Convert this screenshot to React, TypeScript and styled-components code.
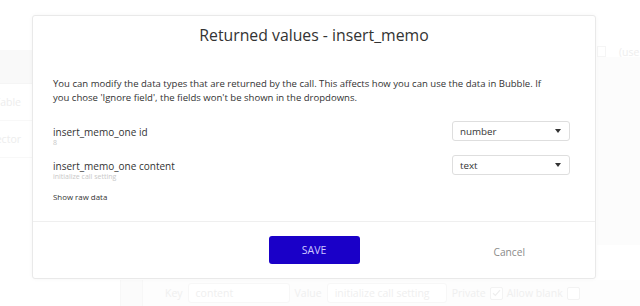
import React from "react";
import styled, { createGlobalStyle } from "styled-components";

const Global = createGlobalStyle`
  html, body {
    margin: 0;
    padding: 0;
    background: #ffffff;
    font-family: "Open Sans", "Liberation Sans", sans-serif;
  }
  body {
    width: 640px;
    height: 306px;
    overflow: hidden;
  }
`;

const Page = styled.div`
  position: relative;
  width: 640px;
  height: 306px;
  overflow: hidden;
  display: grid;
  grid-template-columns: 32px 1fr 43px;
  grid-template-rows: 1fr 26px;
`;

const Sidebar = styled.div`
  display: flex;
  flex-direction: column;
  padding-top: 50px;
`;

const SideBand = styled.div`
  height: 33px;
  background: #f9f9f9;
  border-bottom: 1px solid #f5f5f5;
`;

const SideItem = styled.div`
  height: 36px;
  display: flex;
  align-items: center;
  justify-content: flex-end;
  padding-right: 11px;
  white-space: nowrap;
  overflow: hidden;
  font-size: 10.5px;
  color: #ededed;
  border-bottom: 1px solid #f8f8f8;
`;

const Middle = styled.div``;

const RightCol = styled.div`
  display: flex;
  flex-direction: column;
  padding-top: 46px;
`;

const RightHead = styled.div`
  height: 11px;
  display: flex;
  align-items: center;
  gap: 13px;
  white-space: nowrap;
  font-size: 10.5px;
  color: #eeeeee;
`;

const TinyBox = styled.span`
  width: 7px;
  height: 9px;
  border: 1px solid #f5f5f5;
  flex: none;
`;

const RightPanel = styled.div`
  height: 188px;
  background: #fcfcfc;
`;

const BottomRow = styled.div`
  grid-column: 1 / 4;
  display: flex;
  align-items: center;
  padding-left: 120px;
  font-size: 10.5px;
  color: #efefef;
  white-space: nowrap;
  background: linear-gradient(#fdfdfd, #fdfdfd) no-repeat 120px 0 / 520px 100%;
`;

const BottomBlock = styled.div`
  width: 21px;
  align-self: stretch;
  border-left: 1px solid #f7f7f7;
  border-right: 1px solid #f7f7f7;
  background: #fbfbfb;
  margin-right: 22px;
`;

const FieldLabel = styled.span`
  margin-right: 5px;
`;

const FieldInput = styled.span<{ $w: number }>`
  width: ${(p) => p.$w}px;
  height: 20px;
  box-sizing: border-box;
  border: 1px solid #f7f7f7;
  border-radius: 3px;
  padding-left: 7px;
  display: flex;
  align-items: center;
  margin-right: 5px;
  background: #ffffff;
`;

const Check = styled.span`
  width: 13px;
  height: 13px;
  box-sizing: border-box;
  border: 1px solid #f3f3f3;
  border-radius: 2px;
  display: inline-flex;
  align-items: center;
  justify-content: center;
  margin: 0 4px;
  background: #ffffff;
`;

const Modal = styled.div`
  position: absolute;
  left: 32px;
  top: 15px;
  width: 564px;
  height: 264px;
  box-sizing: border-box;
  background: #ffffff;
  border: 1px solid #e9e9e9;
  border-radius: 3px;
  box-shadow: 0 0 4px rgba(0, 0, 0, 0.04);
  display: flex;
  flex-direction: column;
`;

const Header = styled.div`
  height: 38px;
  display: flex;
  align-items: center;
  justify-content: center;
  font-size: 15.8px;
  color: #333333;
`;

const Body = styled.div`
  flex: 1;
  padding: 23px 25px 0 20px;
  display: flex;
  flex-direction: column;
  border-bottom: 1px solid #efefef;
`;

const Intro = styled.p`
  margin: 0 0 16px 0;
  max-width: 494px;
  font-size: 9.55px;
  line-height: 14px;
  color: #333333;
`;

const FieldRow = styled.div`
  display: flex;
  align-items: flex-start;
  justify-content: space-between;
  margin-bottom: 8px;
`;

const FieldText = styled.div`
  display: flex;
  flex-direction: column;
  padding-top: 4px;
`;

const FieldName = styled.span`
  font-size: 10px;
  line-height: 14px;
  color: #333333;
`;

const FieldSub = styled.span`
  font-size: 7px;
  line-height: 8px;
  color: #c8c8c8;
`;

const Select = styled.div`
  width: 118px;
  height: 20px;
  box-sizing: border-box;
  border: 1px solid #dedede;
  border-radius: 3px;
  display: flex;
  align-items: center;
  justify-content: space-between;
  padding: 0 8px 0 7px;
  font-size: 9.8px;
  color: #333333;
`;

const Caret = styled.span`
  width: 0;
  height: 0;
  border-left: 3.5px solid transparent;
  border-right: 3.5px solid transparent;
  border-top: 4px solid #333333;
`;

const RawLink = styled.div`
  margin-top: 2px;
  font-size: 7.9px;
  line-height: 12px;
  color: #333333;
`;

const Footer = styled.div`
  height: 56px;
  display: grid;
  grid-template-columns: 1fr 91px 1fr;
  align-items: center;
`;

const SaveButton = styled.button`
  grid-column: 2;
  height: 28px;
  margin-top: -1px;
  border: none;
  border-radius: 3px;
  background: #1a00c8;
  color: #cfc8ff;
  font-family: "Open Sans", "Liberation Sans", sans-serif;
  font-size: 10.5px;
  text-transform: uppercase;
  cursor: pointer;
`;

const CancelButton = styled.span`
  grid-column: 3;
  justify-self: end;
  margin-right: 70px;
  margin-top: 3px;
  font-size: 10.2px;
  color: #8a8a8a;
`;

const fields = [
  { name: "insert_memo_one id", sub: "8", type: "number" },
  { name: "insert_memo_one content", sub: "initialize call setting", type: "text" },
];

export default function App() {
  return (
    <>
      <Global />
      <Page>
        <Sidebar>
          <SideBand />
          <SideItem>Data Table</SideItem>
          <SideItem>Selector</SideItem>
        </Sidebar>
        <Middle />
        <RightCol>
          <RightHead>
            <TinyBox />
            (use
          </RightHead>
          <RightPanel />
        </RightCol>
        <BottomRow>
          <BottomBlock />
          <FieldLabel>Key</FieldLabel>
          <FieldInput $w={102}>content</FieldInput>
          <FieldLabel>Value</FieldLabel>
          <FieldInput $w={120}>initialize call setting</FieldInput>
          <span>Private</span>
          <Check>
            <svg width="9" height="8" viewBox="0 0 9 8">
              <path d="M1 4.2 L3.4 6.4 L8 1.2" fill="none" stroke="#eeeeee" strokeWidth="1.2" />
            </svg>
          </Check>
          <span>Allow blank</span>
          <Check />
        </BottomRow>

        <Modal>
          <Header>Returned values - insert_memo</Header>
          <Body>
            <Intro>
              You can modify the data types that are returned by the call. This affects how you can use the data in
              Bubble. If you chose 'Ignore field', the fields won't be shown in the dropdowns.
            </Intro>
            {fields.map((f) => (
              <FieldRow key={f.name}>
                <FieldText>
                  <FieldName>{f.name}</FieldName>
                  <FieldSub>{f.sub}</FieldSub>
                </FieldText>
                <Select>
                  {f.type}
                  <Caret />
                </Select>
              </FieldRow>
            ))}
            <RawLink>Show raw data</RawLink>
          </Body>
          <Footer>
            <SaveButton>Save</SaveButton>
            <CancelButton>Cancel</CancelButton>
          </Footer>
        </Modal>
      </Page>
    </>
  );
}
